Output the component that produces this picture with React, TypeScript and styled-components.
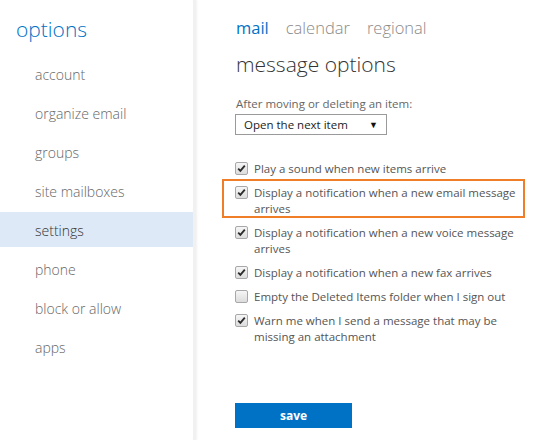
import React from "react";
import styled, { createGlobalStyle } from "styled-components";

const GlobalStyle = createGlobalStyle`
  html, body {
    margin: 0;
    padding: 0;
    background: #fff;
    font-family: "Open Sans", "Noto Sans", sans-serif;
  }
`;

const Page = styled.div`
  width: 536px;
  height: 440px;
  display: flex;
  overflow: hidden;
`;

const Sidebar = styled.nav`
  width: 193px;
  flex-shrink: 0;
  border-right: 3px solid #f1f1f1;
  box-shadow: 1px 0 2px rgba(0, 0, 0, 0.06);
`;

const SideTitle = styled.div`
  font-size: 21px;
  font-weight: 300;
  color: #0072c6;
  padding: 15px 0 0 16px;
  height: 41px;
`;

const NavList = styled.div`
  display: flex;
  flex-direction: column;
  gap: 4px;
`;

const NavItem = styled.div<{ $active?: boolean }>`
  height: 35px;
  display: flex;
  align-items: center;
  padding: 2px 0 0 35px;
  box-sizing: border-box;
  font-size: 14px;
  font-weight: 300;
  color: ${(p) => (p.$active ? "#333" : "#666")};
  background: ${(p) => (p.$active ? "#dde9f7" : "transparent")};
`;

const Main = styled.main`
  flex: 1;
  padding: 16px 0 0 40px;
`;

const Tabs = styled.div`
  display: flex;
  gap: 17px;
  font-size: 16.5px;
  height: 28px;
`;

const Tab = styled.span<{ $active?: boolean }>`
  color: ${(p) => (p.$active ? "#0072c6" : "#8a8a8a")};
  font-weight: ${(p) => (p.$active ? 400 : 300)};
`;

const Heading = styled.h1`
  margin: 6px 0 0;
  font-size: 21px;
  font-weight: 300;
  color: #333;
  height: 36px;
  line-height: 28px;
`;

const Label = styled.div`
  font-size: 11.5px;
  color: #666;
  margin-top: 10px;
  line-height: 16px;
`;

const Select = styled.div`
  width: 134px;
  height: 19px;
  border: 1px solid #9a9a9a;
  display: flex;
  align-items: center;
  justify-content: space-between;
  padding: 0 8px;
  margin: 2px 0 0 -1px;
  font-size: 11.5px;
  color: #222;
`;

const Arrow = styled.span`
  font-size: 9px;
  color: #111;
`;

const Options = styled.div`
  margin-top: 26px;
  display: flex;
  flex-direction: column;
  gap: 8px;
  width: 296px;
`;

const Row = styled.div`
  display: flex;
  gap: 6px;
  font-size: 11.5px;
  line-height: 16px;
  color: #555;
  position: relative;
`;

const Highlight = styled.div`
  position: absolute;
  left: -14px;
  top: -6px;
  width: 303px;
  height: 39px;
  box-sizing: border-box;
  border: 2px solid #f07d27;
  pointer-events: none;
`;

const Box = styled.span`
  width: 11px;
  height: 11px;
  margin: 1px 0 0 -1px;
  flex-shrink: 0;
  border: 1px solid #a8a8a8;
  border-radius: 2px;
  background: linear-gradient(#f6f6f6, #dcdcdc);
  display: flex;
  align-items: center;
  justify-content: center;
`;

const SaveButton = styled.button`
  margin: 58px 0 0 -1px;
  width: 117px;
  height: 25px;
  border: 0;
  background: #0072c6;
  color: #fff;
  font-family: "Open Sans", sans-serif;
  font-size: 12px;
  font-weight: 700;
  padding: 0;
`;

const Check = () => (
  <svg width="9" height="9" viewBox="0 0 9 9">
    <path d="M1.2 4.6 L3.4 6.9 L7.8 1.6" fill="none" stroke="#2b2b2b" strokeWidth="1.8" />
  </svg>
);

const navItems = [
  "account",
  "organize email",
  "groups",
  "site mailboxes",
  "settings",
  "phone",
  "block or allow",
  "apps",
];

const options = [
  { text: "Play a sound when new items arrive", checked: true },
  { text: "Display a notification when a new email message arrives", checked: true, highlight: true },
  { text: "Display a notification when a new voice message arrives", checked: true },
  { text: "Display a notification when a new fax arrives", checked: true },
  { text: "Empty the Deleted Items folder when I sign out", checked: false },
  { text: "Warn me when I send a message that may be missing an attachment", checked: true },
];

export default function App() {
  return (
    <Page>
      <GlobalStyle />
      <Sidebar>
        <SideTitle>options</SideTitle>
        <NavList>
          {navItems.map((n) => (
            <NavItem key={n} $active={n === "settings"}>
              {n}
            </NavItem>
          ))}
        </NavList>
      </Sidebar>
      <Main>
        <Tabs>
          <Tab $active>mail</Tab>
          <Tab>calendar</Tab>
          <Tab>regional</Tab>
        </Tabs>
        <Heading>message options</Heading>
        <Label>After moving or deleting an item:</Label>
        <Select>
          <span>Open the next item</span>
          <Arrow>▼</Arrow>
        </Select>
        <Options>
          {options.map((o) => (
            <Row key={o.text}>
              {o.highlight && <Highlight />}
              <Box>{o.checked && <Check />}</Box>
              <span>{o.text}</span>
            </Row>
          ))}
        </Options>
        <SaveButton>save</SaveButton>
      </Main>
    </Page>
  );
}
